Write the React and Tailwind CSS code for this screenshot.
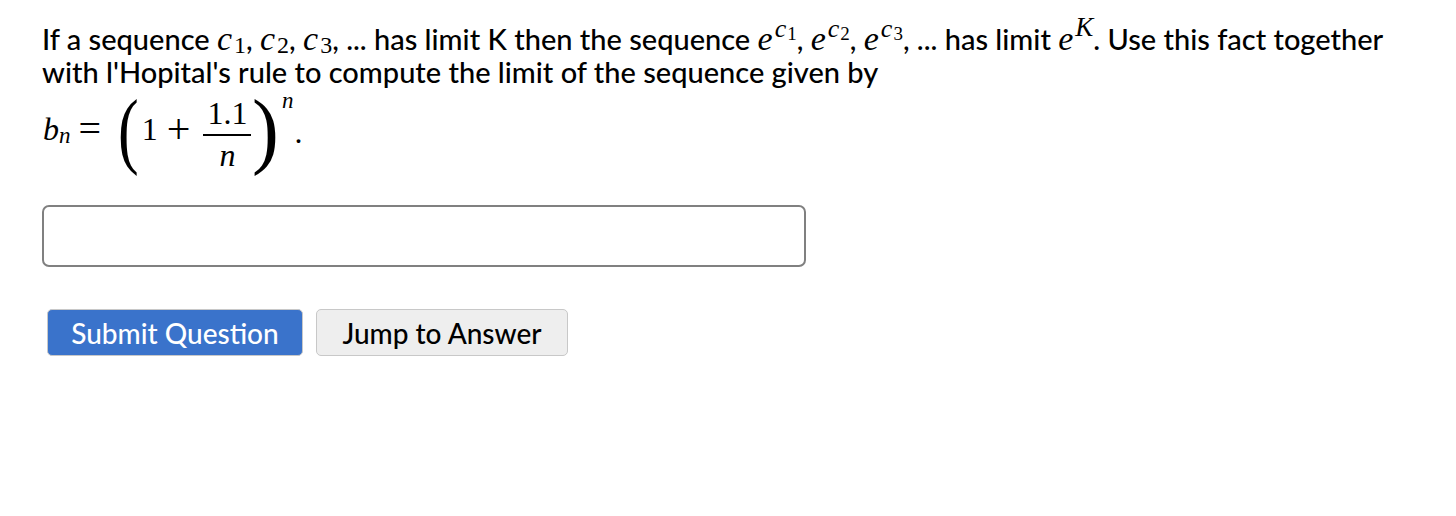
import React from "react";

const SERIF = { fontFamily: '"Liberation Serif", "DejaVu Serif", serif' };

const M = ({ children, className = "" }) => (
  <span className={"italic " + className} style={SERIF}>{children}</span>
);
const R = ({ children, className = "" }) => (
  <span className={className} style={SERIF}>{children}</span>
);

function Sub({ base, sub }) {
  return (
    <span className="whitespace-nowrap leading-none">
      <M className="text-[34px]">{base}</M>
      <R className="text-[24px] ml-[2px] relative top-[3px]">{sub}</R>
    </span>
  );
}

function ESup({ sub }) {
  return (
    <span className="whitespace-nowrap leading-none">
      <M className="text-[34px]">e</M>
      <span className="relative -top-[13px] leading-none ml-[2px]">
        <M className="text-[26px]">c</M>
        <R className="text-[19px] ml-[1px] relative top-[3px]">{sub}</R>
      </span>
    </span>
  );
}

export default function App() {
  return (
    <div className="w-[1456px] h-[516px] bg-white text-black" style={{ fontFamily: 'Lato, "Noto Sans", sans-serif' }}>
      <div className="pl-[42px] pt-[22px]">
        <div className="text-[29px] leading-[33px] font-medium">
          <div className="whitespace-nowrap h-[33px] leading-[33px]">
            If a sequence <Sub base="c" sub="1" />, <Sub base="c" sub="2" />, <Sub base="c" sub="3" />, ... has limit K then the sequence{" "}
            <ESup sub="1" />, <ESup sub="2" />, <ESup sub="3" />, ... has limit{" "}
            <span className="whitespace-nowrap leading-none">
              <M className="text-[34px]">e</M>
              <M className="text-[27px] ml-[2px] relative -top-[14px]">K</M>
            </span>
            . Use this fact together
          </div>
          <div className="whitespace-nowrap h-[33px]">with l'Hopital's rule to compute the limit of the sequence given by</div>
        </div>

        <div className="flex items-center h-[84px] -mt-[1px]" style={SERIF}>
          <M className="text-[32px] ml-[1px]">b</M>
          <M className="text-[23px] relative top-[7px]">n</M>
          <R className="text-[40px] ml-[8px]">=</R>
          <R className="text-[62px] leading-[62px] ml-[17px] inline-block scale-y-[1.35] relative top-[1px]">(</R>
          <R className="text-[32px] ml-[3px]">1</R>
          <R className="text-[42px] ml-[9px]">+</R>
          <span className="inline-flex flex-col items-center ml-[13px] relative top-[4px]">
            <R className="text-[32px] leading-[32px] px-[4px]">1.1</R>
            <span className="block w-[48px] h-[1.5px] bg-black my-[5px]"></span>
            <M className="text-[32px] leading-[28px]">n</M>
          </span>
          <R className="text-[62px] leading-[62px] ml-[4px] inline-block scale-y-[1.35] scale-x-[1.3] relative top-[1px]">)</R>
          <span className="self-start flex">
            <M className="text-[23px] leading-[23px] mt-[2px] ml-[6px]">n</M>
          </span>
          <R className="text-[32px] ml-[1px] relative top-[3px]">.</R>
        </div>

        <div className="mt-[34px] w-[764px] h-[62px] border-2 border-[#808080] rounded-[7px] bg-white"></div>

        <div className="flex gap-[13px] mt-[42px] ml-[5px]">
          <button className="w-[256px] h-[47px] rounded-[5px] border-[1.5px] border-[#c8c8c8] bg-[#3a73cb] text-white text-[28px] font-medium leading-none" style={{ fontFamily: 'Lato, "Noto Sans", sans-serif' }}>
            Submit Question
          </button>
          <button className="w-[252px] h-[47px] rounded-[5px] border-[1.5px] border-[#c8c8c8] bg-[#eeeeee] text-black text-[28px] font-medium leading-none" style={{ fontFamily: 'Lato, "Noto Sans", sans-serif' }}>
            Jump to Answer
          </button>
        </div>
      </div>
    </div>
  );
}
